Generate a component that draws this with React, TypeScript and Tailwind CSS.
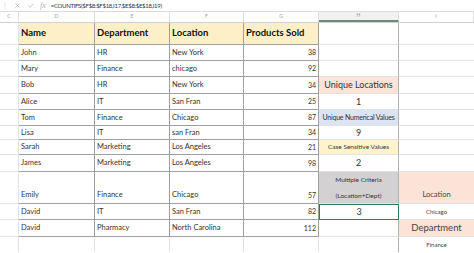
import React from "react";

type Row = { n: string; d: string; l: string; p: string };
const data: Row[] = [
  { n: "John", d: "HR", l: "New York", p: "38" },
  { n: "Mary", d: "Finance", l: "chicago", p: "92" },
  { n: "Bob", d: "HR", l: "New York", p: "34" },
  { n: "Alice", d: "IT", l: "San Fran", p: "25" },
  { n: "Tom", d: "Finance", l: "Chicago", p: "87" },
  { n: "Lisa", d: "IT", l: "san Fran", p: "34" },
  { n: "Sarah", d: "Marketing", l: "Los Angeles", p: "21" },
  { n: "James", d: "Marketing", l: "Los Angeles", p: "98" },
  { n: "Emily", d: "Finance", l: "Chicago", p: "57" },
  { n: "David", d: "IT", l: "San Fran", p: "82" },
  { n: "David", d: "Pharmacy", l: "North Carolina", p: "112" },
];

const light = "border-[#e2e2e2]";

function HCell({ i }: { i: number }) {
  const cell = "border-r border-r-[#b0b0b0] border-b border-b-[#e2e2e2] text-[#333]";
  const c = `${cell} flex items-center justify-center`;
  switch (i) {
    case 2:
      return <div className={`${c} bg-[#fbe4d7] text-[9px]`}>Unique Locations</div>;
    case 3:
      return <div className={`${c} text-[9px]`}>1</div>;
    case 4:
      return <div className={`${c} bg-[#dce3f3] text-[7px] tracking-[-0.2px] whitespace-nowrap`}>Unique Numerical Values</div>;
    case 5:
      return <div className={`${c} text-[9px]`}>9</div>;
    case 6:
      return <div className={`${c} bg-[#fff3cd] text-[6.5px]`}>Case Sensitive Values</div>;
    case 7:
      return <div className={`${c} text-[9px]`}>2</div>;
    case 8:
      return (
        <div className={`${cell} bg-[#d3d1d1] flex flex-col items-center justify-between pt-[4px] pb-[3px] text-[6.5px] leading-[8px]`}>
          <span>Multiple Criteria</span>
          <span>(Location+Dept)</span>
        </div>
      );
    case 9:
      return <div className="border-[1.5px] border-[#2f7d4f] flex items-center justify-center text-[9px] text-[#333]">3</div>;
    default:
      return <div className={cell} />;
  }
}

function ICell({ i }: { i: number }) {
  const base = `border-b ${light} flex justify-center text-[#444]`;
  switch (i) {
    case 8:
      return <div className={`${base} bg-[#fbe4d7] items-end pb-[3px] text-[7.5px]`}>Location</div>;
    case 9:
      return <div className={`${base} items-center text-[6px]`}>Chicago</div>;
    case 10:
      return <div className={`${base} items-center bg-[#fbe4d7] text-[9.5px]`}>Department</div>;
    default:
      return <div className={base} />;
  }
}

export default function App() {
  const dark = "border-[#a0a0a0]";
  return (
    <div
      className="w-[474px] h-[253px] overflow-hidden bg-white text-[#222]"
      style={{ fontFamily: "Lato, 'Noto Sans', sans-serif" }}
    >
      {/* formula bar */}
      <div className="h-[12px] flex items-center border-b border-[#dcdcdc]">
        <svg className="shrink-0 ml-[4px]" width="2" height="7" viewBox="0 0 2 7">
          <circle cx="1" cy="1" r="0.6" fill="#c4c4c4" />
          <circle cx="1" cy="3.5" r="0.6" fill="#c4c4c4" />
          <circle cx="1" cy="6" r="0.6" fill="#c4c4c4" />
        </svg>
        <svg className="shrink-0 ml-[9px]" width="5" height="5" viewBox="0 0 5 5">
          <path d="M0.5 0.5 L4.5 4.5 M4.5 0.5 L0.5 4.5" stroke="#bdbdbd" strokeWidth="0.8" />
        </svg>
        <svg className="shrink-0 ml-[8px]" width="6" height="5" viewBox="0 0 6 5">
          <path d="M0.5 2.6 L2.2 4.3 L5.5 0.6" stroke="#bdbdbd" strokeWidth="0.8" fill="none" />
        </svg>
        <span
          className="shrink-0 ml-[6px] text-[8px] italic text-[#b0b0b0] leading-none"
          style={{ fontFamily: "'Liberation Serif', serif" }}
        >
          fx
        </span>
        <span className="shrink-0 ml-[5px] text-[6px] text-[#333] tracking-[-0.3px] leading-none whitespace-nowrap">
          =COUNTIFS($F$8:$F$18,I17,$E$8:$E$18,I19)
        </span>
      </div>
      {/* column headers */}
      <div className="grid grid-cols-[19px_76px_75px_74px_75px_80px_75px] h-[11px] border-b border-[#d0d0d0] text-[5px] text-[#9a9a9a]">
        {["C", "D", "E", "F", "G", "H", "I"].map((c) => (
          <div
            key={c}
            className={`flex items-center justify-center border-r border-[#e0e0e0] ${
              c === "H" ? "bg-[#f1f1f1] border-b-2 border-b-[#6d8a7a]" : ""
            }`}
          >
            {c}
          </div>
        ))}
      </div>
      {/* sheet body */}
      <div className="grid grid-cols-[19px_76px_75px_74px_75px_80px_75px] grid-rows-[22px_16px_16px_17px_16px_16px_14px_15px_17px_32px_16px_17px_15px] text-[7.5px] text-[#333]">
        {/* header row */}
        <div className={`border-r ${dark} border-b ${light}`} />
        {["Name", "Department", "Location", "Products Sold"].map((h) => (
          <div
            key={h}
            className={`bg-[#fdf0c9] border-r ${dark} border-b flex items-center px-[2px] font-bold text-[9.5px] text-[#111] whitespace-nowrap`}
          >
            {h}
          </div>
        ))}
        <div className="border-r border-[#b0b0b0] border-b border-b-[#e2e2e2]" />
        <div className={`border-b ${light}`} />
        {data.map((r, i) => {
          const align = i === 8 ? "items-end pb-[3px]" : "items-center";
          return (
            <React.Fragment key={i}>
              <div className={`border-r ${dark} border-b ${light}`} />
              <div className={`border-r ${dark} border-b flex ${align} px-[2px]`}>{r.n}</div>
              <div className={`border-r ${dark} border-b flex ${align} px-[2px]`}>{r.d}</div>
              <div className={`border-r ${dark} border-b flex ${align} px-[2px]`}>{r.l}</div>
              <div className={`border-r ${dark} border-b flex ${align} justify-end px-[2px] text-[7px]`}>{r.p}</div>
              <HCell i={i} />
              <ICell i={i} />
            </React.Fragment>
          );
        })}
        {/* last row */}
        <div className={`border-r ${light}`} />
        <div className={`border-r ${light}`} />
        <div className={`border-r ${light}`} />
        <div className={`border-r ${light}`} />
        <div className={`border-r ${light}`} />
        <div className="border-r border-[#b0b0b0]" />
        <div className="flex items-center justify-center text-[6px] text-[#444]">Finance</div>
      </div>
    </div>
  );
}
